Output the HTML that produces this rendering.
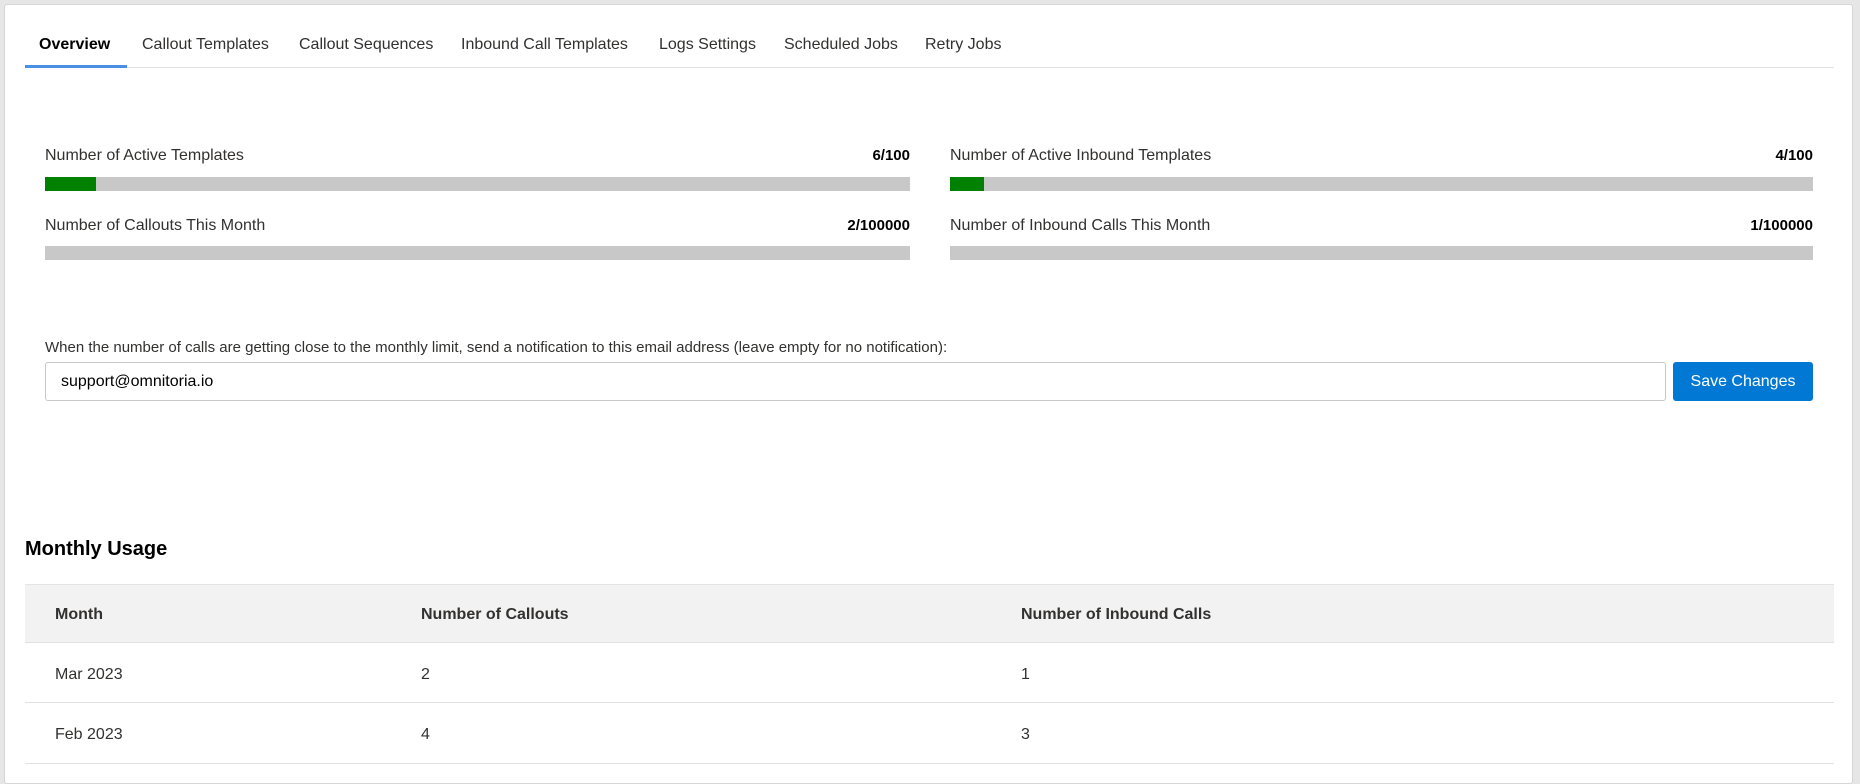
<!DOCTYPE html>
<html><head><meta charset="utf-8"><style>
*{box-sizing:border-box;margin:0;padding:0}
html,body{width:1860px;height:767px;overflow:hidden;background:#e6e6e6;font-family:"Liberation Sans",sans-serif;color:#323130}
.card{position:absolute;left:4px;top:4px;width:1849px;height:780px;background:#fff;border:1px solid #d6d6d6;border-radius:3px}
.abs{position:absolute;white-space:nowrap}
.tab{position:absolute;top:36px;font-size:16px;color:#323130}
.bar{position:absolute;height:14px;background:#c8c8c8}
.fill{height:100%;background:#008000}
.lbl{font-size:16px}
.val{font-size:15px;font-weight:bold;color:#000}
.th{font-size:16px;font-weight:bold;color:#323130}
.td{font-size:16px}
</style></head><body>
<div class="card"></div>
<div class="tab" style="left:39px;font-weight:bold;color:#000">Overview</div>
<div class="tab" style="left:142px">Callout Templates</div>
<div class="tab" style="left:299px">Callout Sequences</div>
<div class="tab" style="left:461px">Inbound Call Templates</div>
<div class="tab" style="left:659px">Logs Settings</div>
<div class="tab" style="left:784px">Scheduled Jobs</div>
<div class="tab" style="left:925px">Retry Jobs</div>
<div class="abs" style="left:25px;top:67px;width:1809px;height:1px;background:#e1e1e1"></div>
<div class="abs" style="left:25px;top:65px;width:102px;height:3px;background:#4a90e2"></div>

<div class="abs lbl" style="left:45px;top:147px">Number of Active Templates</div>
<div class="abs val" style="left:860px;top:147px;width:50px;text-align:right">6/100</div>
<div class="bar" style="left:45px;top:177px;width:865px"><div class="fill" style="width:51px"></div></div>
<div class="abs lbl" style="left:950px;top:147px">Number of Active Inbound Templates</div>
<div class="abs val" style="left:1743px;top:147px;width:70px;text-align:right">4/100</div>
<div class="bar" style="left:950px;top:177px;width:863px"><div class="fill" style="width:34px"></div></div>

<div class="abs lbl" style="left:45px;top:217px">Number of Callouts This Month</div>
<div class="abs val" style="left:810px;top:217px;width:100px;text-align:right">2/100000</div>
<div class="bar" style="left:45px;top:246px;width:865px"></div>
<div class="abs lbl" style="left:950px;top:217px">Number of Inbound Calls This Month</div>
<div class="abs val" style="left:1713px;top:217px;width:100px;text-align:right">1/100000</div>
<div class="bar" style="left:950px;top:246px;width:863px"></div>

<div class="abs" style="left:45px;top:339px;font-size:15px">When the number of calls are getting close to the monthly limit, send a notification to this email address (leave empty for no notification):</div>
<div class="abs" style="left:45px;top:362px;width:1621px;height:39px;border:1px solid #c8c8c8;border-radius:3px;font-size:16px;padding:10px 0 0 15px;color:#000">support@omnitoria.io</div>
<div class="abs" style="left:1673px;top:362px;width:140px;height:39px;background:#0078d4;border-radius:3px;color:#fff;font-size:16px;text-align:center;line-height:39px">Save Changes</div>

<div class="abs" style="left:25px;top:538px;font-size:20px;font-weight:bold;color:#000">Monthly Usage</div>
<div class="abs" style="left:25px;top:584px;width:1809px;height:59px;background:#f2f2f2;border-top:1px solid #e4e4e4;border-bottom:1px solid #e1e1e1"></div>
<div class="abs th" style="left:55px;top:606px">Month</div>
<div class="abs th" style="left:421px;top:606px">Number of Callouts</div>
<div class="abs th" style="left:1021px;top:606px">Number of Inbound Calls</div>
<div class="abs td" style="left:55px;top:666px">Mar 2023</div>
<div class="abs td" style="left:421px;top:666px">2</div>
<div class="abs td" style="left:1021px;top:666px">1</div>
<div class="abs" style="left:25px;top:702px;width:1809px;height:1px;background:#e1e1e1"></div>
<div class="abs td" style="left:55px;top:726px">Feb 2023</div>
<div class="abs td" style="left:421px;top:726px">4</div>
<div class="abs td" style="left:1021px;top:726px">3</div>
<div class="abs" style="left:25px;top:763px;width:1809px;height:1px;background:#e1e1e1"></div>
</body></html>
